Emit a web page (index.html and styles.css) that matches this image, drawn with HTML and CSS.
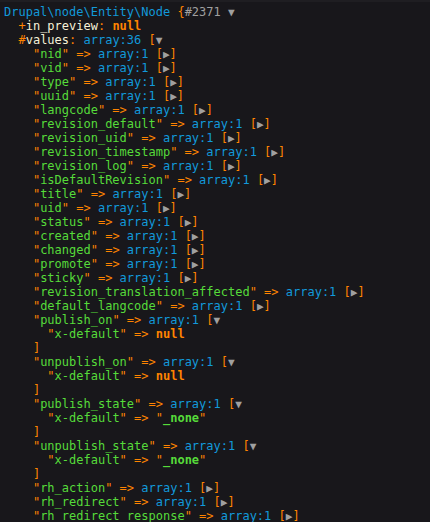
FILE: index.html
```html
<!DOCTYPE html>
<html lang="en">
<head>
    <meta charset="UTF-8">
    <title>Node dump</title>
    <link rel="stylesheet" href="styles.css">
</head>
<body>
<pre class="sf-dump"><span class="note">Drupal\node\Entity\Node</span> {<span class="ref">#2371</span> <span class="tog">▼</span>
  +<span class="pub">in_preview</span>: <span class="const">null</span>
  #<span class="pub">values</span>: <span class="note">array:36</span> [<span class="tog">▼</span>
    "<span class="key">nid</span>" => <span class="note">array:1</span> [<span class="tog">▶</span>]
    "<span class="key">vid</span>" => <span class="note">array:1</span> [<span class="tog">▶</span>]
    "<span class="key">type</span>" => <span class="note">array:1</span> [<span class="tog">▶</span>]
    "<span class="key">uuid</span>" => <span class="note">array:1</span> [<span class="tog">▶</span>]
    "<span class="key">langcode</span>" => <span class="note">array:1</span> [<span class="tog">▶</span>]
    "<span class="key">revision_default</span>" => <span class="note">array:1</span> [<span class="tog">▶</span>]
    "<span class="key">revision_uid</span>" => <span class="note">array:1</span> [<span class="tog">▶</span>]
    "<span class="key">revision_timestamp</span>" => <span class="note">array:1</span> [<span class="tog">▶</span>]
    "<span class="key">revision_log</span>" => <span class="note">array:1</span> [<span class="tog">▶</span>]
    "<span class="key">isDefaultRevision</span>" => <span class="note">array:1</span> [<span class="tog">▶</span>]
    "<span class="key">title</span>" => <span class="note">array:1</span> [<span class="tog">▶</span>]
    "<span class="key">uid</span>" => <span class="note">array:1</span> [<span class="tog">▶</span>]
    "<span class="key">status</span>" => <span class="note">array:1</span> [<span class="tog">▶</span>]
    "<span class="key">created</span>" => <span class="note">array:1</span> [<span class="tog">▶</span>]
    "<span class="key">changed</span>" => <span class="note">array:1</span> [<span class="tog">▶</span>]
    "<span class="key">promote</span>" => <span class="note">array:1</span> [<span class="tog">▶</span>]
    "<span class="key">sticky</span>" => <span class="note">array:1</span> [<span class="tog">▶</span>]
    "<span class="key">revision_translation_affected</span>" => <span class="note">array:1</span> [<span class="tog">▶</span>]
    "<span class="key">default_langcode</span>" => <span class="note">array:1</span> [<span class="tog">▶</span>]
    "<span class="key">publish_on</span>" => <span class="note">array:1</span> [<span class="tog">▼</span>
      "<span class="key">x-default</span>" => <span class="const">null</span>
    ]
    "<span class="key">unpublish_on</span>" => <span class="note">array:1</span> [<span class="tog">▼</span>
      "<span class="key">x-default</span>" => <span class="const">null</span>
    ]
    "<span class="key">publish_state</span>" => <span class="note">array:1</span> [<span class="tog">▼</span>
      "<span class="key">x-default</span>" => "<span class="str">_none</span>"
    ]
    "<span class="key">unpublish_state</span>" => <span class="note">array:1</span> [<span class="tog">▼</span>
      "<span class="key">x-default</span>" => "<span class="str">_none</span>"
    ]
    "<span class="key">rh_action</span>" => <span class="note">array:1</span> [<span class="tog">▶</span>]
    "<span class="key">rh_redirect</span>" => <span class="note">array:1</span> [<span class="tog">▶</span>]
    "<span class="key">rh_redirect_response</span>" => <span class="note">array:1</span> [<span class="tog">▶</span>]</pre>
</body>
</html>
```
FILE: styles.css
```css
html, body {
    margin: 0;
    padding: 0;
    background-color: #18171b;
    height: 100%;
    overflow: hidden;
}

pre.sf-dump {
    margin: 0;
    padding: 3px 4px 5px;
    border-top: 2px solid #1f1e22;
    background-color: #18171b;
    color: #ff8400;
    font: 12px "DejaVu Sans Mono", monospace;
    line-height: 14px;
    white-space: pre;
}

.note {
    color: #1299da;
}

.ref {
    color: #a0a0a0;
}

.pub {
    color: #f6f1d8;
}

.key {
    color: #56db3a;
}

.str {
    color: #56db3a;
    font-weight: bold;
}

.const {
    font-weight: bold;
}

.tog {
    color: #a0a0a0;
    font-size: 11px;
    line-height: 0;
}
```
